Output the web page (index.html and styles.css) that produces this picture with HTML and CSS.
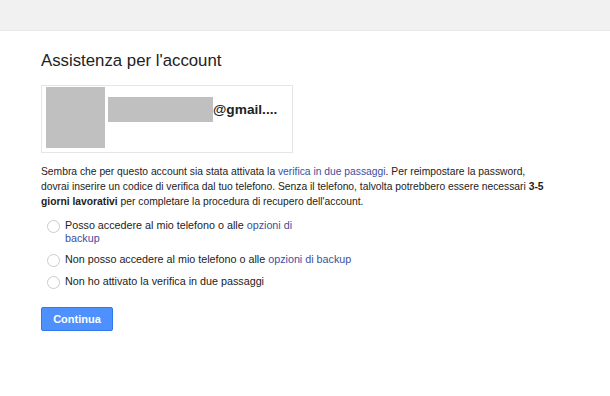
FILE: index.html
```html
<!DOCTYPE html>
<html lang="it">
<head>
	<meta charset="UTF-8">
	<meta name="viewport" content="width=device-width, initial-scale=1.0">
	<title>Assistenza per l'account</title>
	<link rel="stylesheet" href="styles.css">
</head>
<body>
	<div class="top-bar"></div>
	<div class="main">
		<h1 class="title">Assistenza per l'account</h1>
		<div class="account-card">
			<div class="avatar"></div>
			<div class="account-name"><span class="name-hidden"></span><span class="mail">@gmail....</span></div>
		</div>
		<p class="info">Sembra che per questo account sia stata attivata la <a href="#">verifica in due passaggi</a>. Per reimpostare la password, dovrai inserire un codice di verifica dal tuo telefono. Senza il telefono, talvolta potrebbero essere necessari <b>3-5 giorni lavorativi</b> per completare la procedura di recupero dell'account.</p>
		<div class="options">
			<label class="option"><span class="radio"></span><span>Posso accedere al mio telefono o alle <a href="#">opzioni di<br>backup</a></span></label>
			<label class="option"><span class="radio"></span><span>Non posso accedere al mio telefono o alle <a href="#">opzioni di backup</a></span></label>
			<label class="option"><span class="radio"></span><span>Non ho attivato la verifica in due passaggi</span></label>
		</div>
		<button class="continue-button">Continua</button>
	</div>
</body>
</html>
```

FILE: styles.css
```css
body {
	margin: 0;
	font-family: "Liberation Sans", Arial, sans-serif;
	background-color: #ffffff;
	color: #222222;
}
.top-bar {
	height: 30px;
	background-color: #f1f1f1;
	border-bottom: 1px solid #e8e8e8;
}
.main {
	padding: 0 41px;
}
.title {
	margin: 19px 0 0 0;
	font-size: 16.8px;
	font-weight: normal;
	line-height: 22px;
	color: #222222;
}
.account-card {
	display: flex;
	margin-top: 13px;
	width: 246px;
	height: 65px;
	padding: 1px 0 0 4px;
	border: 1px solid #e5e5e5;
}
.avatar {
	width: 59px;
	height: 61px;
	background-color: #c0c0c0;
}
.account-name {
	display: flex;
	align-items: center;
	margin-top: 10px;
	height: 25px;
	padding-left: 3px;
}
.name-hidden {
	display: inline-block;
	width: 105px;
	height: 25px;
	background-color: #c0c0c0;
}
.mail {
	font-size: 13.7px;
	font-weight: bold;
	color: #222222;
}
.info {
	margin: 11px 0 0 0;
	max-width: 510px;
	font-size: 10.3px;
	line-height: 15px;
}
a {
	color: #3b4fa0;
	text-decoration: none;
}
.options {
	display: flex;
	flex-direction: column;
	gap: 8px;
	margin-top: 10px;
	padding-left: 6px;
}
.option {
	display: flex;
	align-items: flex-start;
	gap: 5px;
	font-size: 10.75px;
	line-height: 13px;
	color: #222222;
}
.radio {
	flex: none;
	width: 11px;
	height: 11px;
	margin-top: 1px;
	border: 1px solid #cccccc;
	border-radius: 50%;
	background-color: #ffffff;
}
.continue-button {
	display: block;
	margin-top: 18px;
	width: 72px;
	height: 24px;
	padding: 0;
	font-family: "Liberation Sans", Arial, sans-serif;
	font-size: 11px;
	font-weight: bold;
	color: #ffffff;
	background-color: #4d90fe;
	border: 1px solid #3079ed;
	border-radius: 2px;
}
```
